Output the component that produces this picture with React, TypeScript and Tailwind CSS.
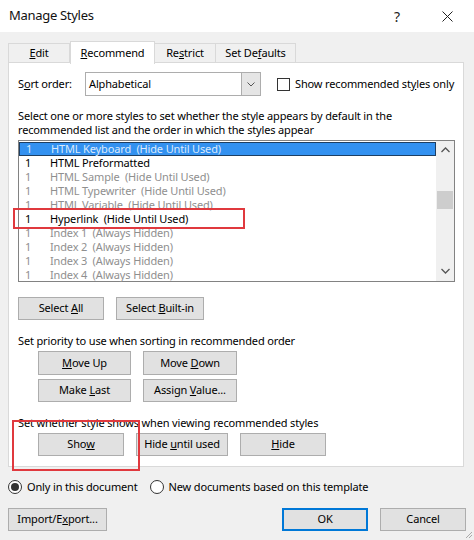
import React from 'react';

const listRows = [
    { name: 'HTML Keyboard', tag: '(Hide Until Used)', dim: true, selected: true },
    { name: 'HTML Preformatted', tag: '', dim: false },
    { name: 'HTML Sample', tag: '(Hide Until Used)', dim: true },
    { name: 'HTML Typewriter', tag: '(Hide Until Used)', dim: true },
    { name: 'HTML Variable', tag: '(Hide Until Used)', dim: true },
    { name: 'Hyperlink', tag: '(Hide Until Used)', dim: false },
    { name: 'Index 1', tag: '(Always Hidden)', dim: true },
    { name: 'Index 2', tag: '(Always Hidden)', dim: true },
    { name: 'Index 3', tag: '(Always Hidden)', dim: true },
    { name: 'Index 4', tag: '(Always Hidden)', dim: true },
];

const Btn: React.FC<{ className?: string; primary?: boolean; children: React.ReactNode }> = ({ className = '', primary, children }) => (
    <div
        className={`h-[23px] flex items-center justify-center bg-[#e1e1e1] border ${primary ? 'border-[#0078d7] shadow-[inset_0_0_0_1px_#0078d7]' : 'border-[#adadad]'} text-black ${className}`}
    >
        <span className="whitespace-pre">{children}</span>
    </div>
);

const App: React.FC = () => {
    return (
        <div className="w-[474px] h-[540px] bg-[#f0f0f0] font-['Noto_Sans',sans-serif] text-[11px] tracking-[-0.15px] text-black relative overflow-hidden select-none">
            {/* title bar */}
            <div className="h-[32px] bg-white flex items-center pl-[9px]">
                <span className="text-[13px] tracking-[-0.3px] text-[#111]">Manage Styles</span>
                <span className="ml-auto w-[20px] text-center text-[14px] text-[#222] mr-[35px]">?</span>
                <svg className="mr-[21px]" width="11" height="11" viewBox="0 0 11 11">
                    <path d="M0.5 0.5 L10.5 10.5 M10.5 0.5 L0.5 10.5" stroke="#222" strokeWidth="1" />
                </svg>
            </div>

            <div className="px-[8px] pt-[9px]">
                {/* tabs */}
                <div className="flex items-end h-[22px] -mb-px relative z-10">
                    <div className="w-[62px] h-[20px] border border-b-0 border-[#d9d9d9] flex items-center justify-center">
                        <span><u>E</u>dit</span>
                    </div>
                    <div className="w-[85px] h-[23px] -mb-px bg-white border border-b-0 border-[#d9d9d9] flex items-center justify-center">
                        <span><u>R</u>ecommend</span>
                    </div>
                    <div className="w-[61px] h-[20px] border border-b-0 border-l-0 border-[#d9d9d9] flex items-center justify-center">
                        <span>Re<u>s</u>trict</span>
                    </div>
                    <div className="w-[80px] h-[20px] border border-b-0 border-l-0 border-[#d9d9d9] flex items-center justify-center">
                        <span className="whitespace-pre">Set De<u>f</u>aults</span>
                    </div>
                </div>

                {/* panel */}
                <div className="w-[456px] h-[405px] bg-white border border-[#d9d9d9] pl-[9px] pt-[9px] relative">
                    <div className="flex items-center h-[24px]">
                        <span className="w-[67px]">S<u>o</u>rt order:</span>
                        <div className="w-[176px] h-[24px] border border-[#adadad] flex items-stretch">
                            <span className="flex-1 flex items-center pl-[3px]">Alphabetical</span>
                            <span className="w-[19px] bg-[#e5e5e5] border-l border-[#adadad] flex items-center justify-center">
                                <svg width="8" height="5" viewBox="0 0 8 5">
                                    <path d="M0.5 0.5 L4 4 L7.5 0.5" fill="none" stroke="#555" strokeWidth="1" />
                                </svg>
                            </span>
                        </div>
                        <span className="ml-[16px] w-[13px] h-[13px] border border-[#333] bg-white"></span>
                        <span className="ml-[5px] whitespace-pre">Show recommended st<u>y</u>les only</span>
                    </div>

                    <div className="mt-[13px] leading-[14px]">
                        Select one or more styles to set whether the style appears by default in the
                        <br />
                        recommended list and the order in which the styles appear
                    </div>

                    {/* style list */}
                    <div className="mt-[3px] w-[437px] h-[142px] border border-[#828282] flex">
                        <div className="flex-1 pt-px">
                            {listRows.map((r, i) => (
                                <div
                                    key={i}
                                    className={`h-[14px] flex items-center leading-[14px] ${r.selected ? 'bg-[#3391f0] border border-[#1d3f63] text-[#dceafb]' : r.dim ? 'text-[#8f8f8f]' : 'text-black'}`}
                                >
                                    <span className="w-[31px] pl-[6px]">1</span>
                                    <span className="whitespace-pre">{r.name}{r.tag ? '  ' + r.tag : ''}</span>
                                </div>
                            ))}
                        </div>
                        <div className="w-[18px] bg-[#f0f0f0] flex flex-col items-center">
                            <svg className="mt-[6px]" width="9" height="6" viewBox="0 0 9 6">
                                <path d="M0.5 5 L4.5 1 L8.5 5" fill="none" stroke="#555" strokeWidth="1.3" />
                            </svg>
                            <div className="mt-[38px] w-[16px] h-[18px] bg-[#cdcdcd]"></div>
                            <svg className="mt-auto mb-[7px]" width="9" height="6" viewBox="0 0 9 6">
                                <path d="M0.5 1 L4.5 5 L8.5 1" fill="none" stroke="#555" strokeWidth="1.3" />
                            </svg>
                        </div>
                    </div>

                    <div className="mt-[15px] flex gap-[12px]">
                        <Btn className="w-[86px]">Select <u>A</u>ll</Btn>
                        <Btn className="w-[88px]">Select <u>B</u>uilt-in</Btn>
                    </div>

                    <div className="mt-[14px] leading-[14px]">Set priority to use when sorting in recommended order</div>
                    <div className="mt-[3px] ml-[20px] grid grid-cols-[93px_94px] gap-x-[12px] gap-y-[4px]">
                        <Btn className="h-[24px]"><u>M</u>ove Up</Btn>
                        <Btn className="h-[24px]">Move <u>D</u>own</Btn>
                        <Btn>Make <u>L</u>ast</Btn>
                        <Btn>Assign <u>V</u>alue...</Btn>
                    </div>

                    <div className="mt-[14px] leading-[14px]">Set whether style shows when viewing recommended styles</div>
                    <div className="mt-[3px] ml-[20px] flex gap-[12px]">
                        <Btn className="w-[86px]">Sho<u>w</u></Btn>
                        <Btn className="w-[92px]">Hide <u>u</u>ntil used</Btn>
                        <Btn className="w-[86px]"><u>H</u>ide</Btn>
                    </div>

                    {/* highlight boxes */}
                    <div className="absolute left-[4px] top-[145px] w-[232px] h-[21px] border-2 border-[#e0393e]"></div>
                    <div className="absolute left-[3px] top-[357px] w-[128px] h-[51px] border-2 border-[#e0393e] z-10"></div>
                </div>

                {/* scope radios */}
                <div className="mt-[12px] h-[16px] flex items-center">
                    <span className="w-[14px] h-[14px] rounded-full border border-[#333] bg-white flex items-center justify-center">
                        <span className="w-[8px] h-[8px] rounded-full bg-[#333]"></span>
                    </span>
                    <span className="ml-[5px]">Only in this document</span>
                    <span className="ml-[12px] w-[14px] h-[14px] rounded-full border border-[#333] bg-white"></span>
                    <span className="ml-[5px]">New documents based on this template</span>
                </div>

                <div className="mt-[13px] flex">
                    <Btn className="w-[99px]">Import/E<u>x</u>port...</Btn>
                    <Btn primary className="ml-auto w-[86px]">OK</Btn>
                    <Btn className="ml-[12px] w-[86px]">Cancel</Btn>
                </div>
            </div>

            <svg className="absolute right-[1px] bottom-[1px]" width="9" height="9" viewBox="0 0 9 9">
                <path d="M8 2 L2 8 M8 5 L5 8" stroke="#aaa" strokeWidth="1" />
            </svg>
        </div>
    );
};

export default App;
